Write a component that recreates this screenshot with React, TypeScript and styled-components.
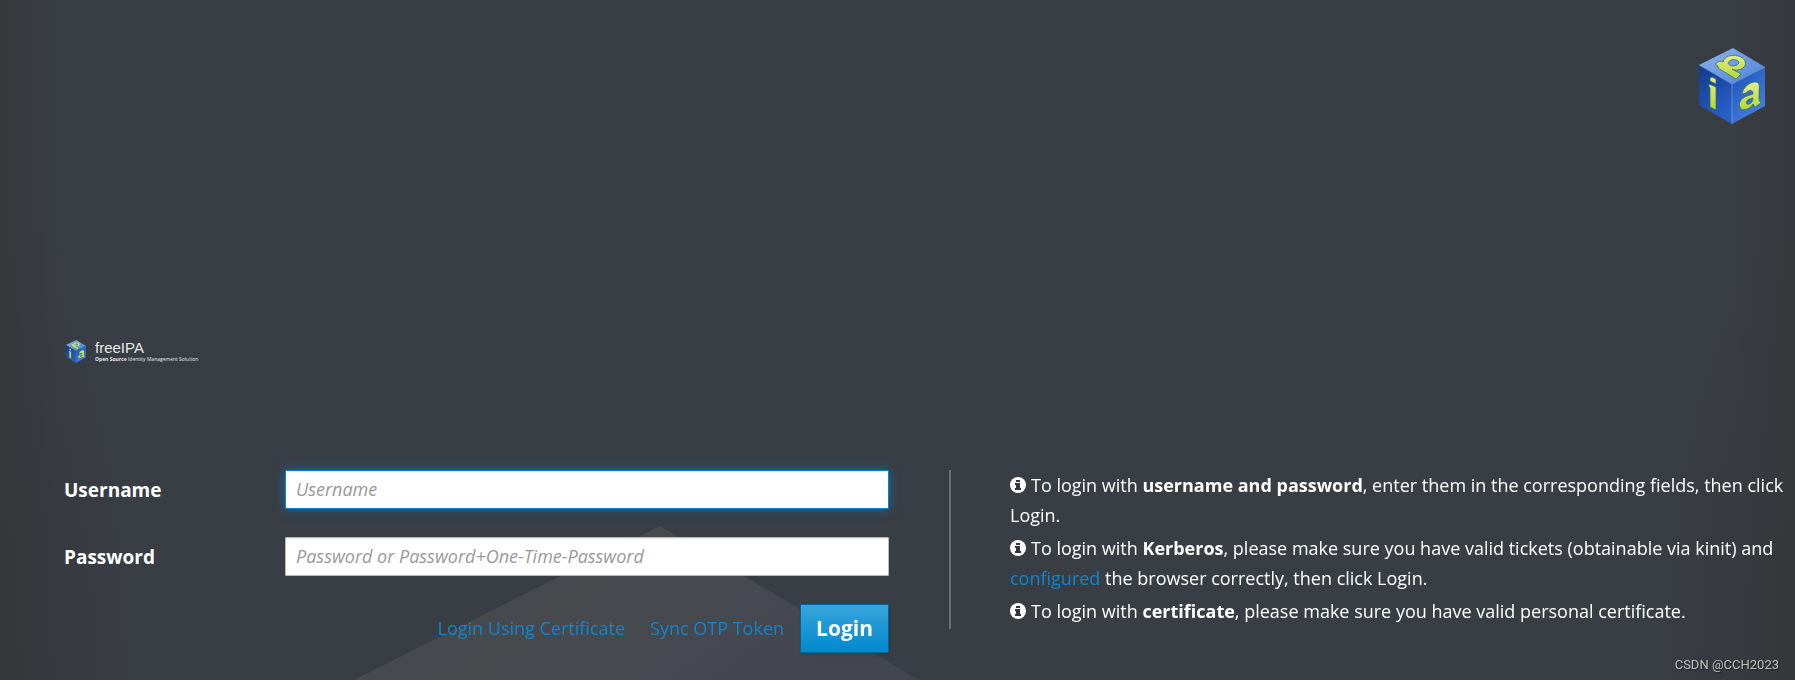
import React from "react";
import styled, { createGlobalStyle } from "styled-components";

const GlobalStyle = createGlobalStyle`
  * { box-sizing: border-box; }
  body {
    margin: 0;
    background: #393d44;
    color: #fff;
    font-family: "Open Sans", "Noto Sans", sans-serif;
    font-size: 18px;
    line-height: 30px;
  }
`;

const Page = styled.div`
  position: relative;
  isolation: isolate;
  display: flex;
  flex-direction: column;
  min-height: 100vh;
  padding-left: 64px;
  overflow: hidden;
  background:
    radial-gradient(ellipse 140px 480px at 0 100%, rgba(51, 55, 57, 0.7), transparent),
    radial-gradient(ellipse 140px 480px at 100% 100%, rgba(51, 55, 57, 0.7), transparent),
    linear-gradient(90deg, rgba(53, 57, 59, 0.8), transparent 60px),
    linear-gradient(270deg, rgba(53, 57, 59, 0.8), transparent 60px),
    #393d44;
`;

const Backdrop = styled.svg`
  position: absolute;
  z-index: -1;
  left: 354px;
  bottom: 0;
  width: 565px;
  height: 154px;
`;

const Header = styled.header`
  display: flex;
  justify-content: flex-end;
  padding: 48px 30px 0 0;
  height: 340px;
`;

const Brand = styled.div`
  height: 130px;
  padding-left: 2px;
`;

const Content = styled.main`
  display: grid;
  grid-template-columns: 825fr 846fr;
  column-gap: 60px;
  align-items: start;
`;

const LoginForm = styled.form`
  display: flex;
  flex-direction: column;
  gap: 28px;
`;

const Field = styled.div`
  display: grid;
  grid-template-columns: 221px 1fr;
  align-items: center;
`;

const Label = styled.label`
  font-size: 19px;
  font-weight: 700;
`;

const TextInput = styled.input`
  width: 100%;
  height: 39px;
  padding: 1px 10px 3px;
  border: 1px solid #bababa;
  border-radius: 1px;
  background: #fff;
  color: #333;
  font: inherit;
  box-shadow: inset 0 1px 1px rgba(0, 0, 0, 0.075);
  outline: none;

  &::placeholder {
    color: #999;
    font-style: italic;
    opacity: 1;
  }

  &:focus {
    border-color: #0088ce;
    box-shadow: inset 0 1px 1px rgba(0, 0, 0, 0.075), 0 0 12px rgba(0, 136, 206, 0.6);
  }
`;

const Actions = styled.div`
  display: flex;
  justify-content: flex-end;
  align-items: center;
`;

const Link = styled.a`
  color: #0f86d3;
  text-decoration: none;
`;

const ActionLink = styled(Link)`
  margin-right: 25px;
  padding-bottom: 2px;

  & + & {
    margin-right: 16px;
  }
`;

const LoginButton = styled.button`
  height: 49px;
  padding: 0 15px 2px;
  border: 1px solid #00659c;
  border-radius: 1px;
  background: linear-gradient(#39a5dc, #0088ce);
  box-shadow: 0 2px 3px rgba(3, 3, 3, 0.1);
  color: #fff;
  font: 700 21px/30px "Open Sans", "Noto Sans", sans-serif;
`;

const Help = styled.ul`
  margin: 0;
  padding: 0 0 0 59px;
  border-left: 2px solid #6c6f73;
  list-style: none;
`;

const HelpItem = styled.li`
  padding-bottom: 3px;
`;

const Info = styled.svg`
  width: 16px;
  height: 16px;
  margin-right: 5px;
  vertical-align: -1px;
`;

const Watermark = styled.footer`
  position: absolute;
  right: 16px;
  bottom: 5px;
  color: #bfc0c2;
  font: 13px/20px Roboto, "Liberation Sans", sans-serif;
  text-shadow: 1px 1px 1px #222;
`;

function CubeShapes({ id }: { id: string }) {
  return (
    <>
      <defs>
        <linearGradient id={`${id}-top`} x1="0" y1="0" x2="1" y2="1">
          <stop offset="0" stopColor="#8fb5ec" />
          <stop offset="1" stopColor="#4b80d8" />
        </linearGradient>
        <linearGradient id={`${id}-left`} x1="0" y1="0" x2="0.5" y2="1">
          <stop offset="0" stopColor="#12398a" />
          <stop offset="1" stopColor="#2860c8" />
        </linearGradient>
        <linearGradient id={`${id}-right`} x1="0" y1="0" x2="0.6" y2="1">
          <stop offset="0" stopColor="#1c4fb4" />
          <stop offset="1" stopColor="#4580e0" />
        </linearGradient>
        <linearGradient id={`${id}-glyph`} x1="0" y1="0" x2="0" y2="1">
          <stop offset="0" stopColor="#e3ec8c" />
          <stop offset="1" stopColor="#b4d82e" />
        </linearGradient>
      </defs>
      <path d="M34 0 66 19 33 36 0 17Z" fill={`url(#${id}-top)`} />
      <path d="M0 17 33 36V76L0 57Z" fill={`url(#${id}-left)`} />
      <path d="M33 36 66 19V58L33 76Z" fill={`url(#${id}-right)`} />
      <path d="M0 17 33 36 66 19M33 36V76" fill="none" stroke="#7ea6e8" strokeWidth="1" opacity="0.6" />
      <g fill={`url(#${id}-glyph)`} stroke="#2f6a5c" strokeWidth="0.7" fillRule="evenodd">
        <path d="M16 16 21 13 24 14C25 9 32 6 39 8C46 10 48 15 45 19C42 22 36 23 33 21L42 26 37 31 19 20V18ZM29 15C30 19 38 19 40 15C40 11 31 10 29 15Z" />
        <path d="M11 30 13 29 17 31V36L11 33ZM10 36 17 39V62L11 59V40L10 39Z" />
        <path d="M43 46C44 39 51 34 56 34C60 34 61 37 60 43V52L62 55 56 59 54 56C51 61 45 63 42 61C38 56 42 50 48 48L54 46C55 42 50 41 47 45ZM54 50C48 51 46 54 48 56C51 57 54 54 54 50Z" />
      </g>
    </>
  );
}

function InfoIcon() {
  return (
    <Info viewBox="0 0 16 16" aria-hidden="true">
      <circle cx="8" cy="8" r="8" fill="#fff" />
      <path d="M6 3H10V5H6ZM5 6H10V11H11V13H5V11H6V8H5Z" fill="#33373d" />
    </Info>
  );
}

export default function App() {
  return (
    <Page>
      <GlobalStyle />
      <Backdrop viewBox="0 0 565 153" preserveAspectRatio="none" aria-hidden="true">
        <defs>
          <linearGradient id="facet" x1="0" y1="0" x2="1" y2="0.4">
            <stop offset="0" stopColor="#474b4c" />
            <stop offset="0.3" stopColor="#474a50" />
            <stop offset="0.5" stopColor="#464a4d" />
            <stop offset="0.75" stopColor="#464950" />
            <stop offset="1" stopColor="#43464e" />
          </linearGradient>
        </defs>
        <path d="M0 153 306 0 565 153Z" fill="url(#facet)" />
      </Backdrop>
      <Header>
        <svg width="66" height="76" viewBox="0 0 66 76" role="img" aria-label="IPA">
          <CubeShapes id="cube" />
        </svg>
      </Header>
      <Brand>
        <svg width="134" height="24" viewBox="0 0 134 24" role="img" aria-label="freeIPA">
          <g transform="scale(0.3)">
            <CubeShapes id="brand" />
          </g>
          <g fill="#e8e8ea" fontFamily="'Liberation Sans', Arial, sans-serif">
            <text x="29" y="13" fontSize="15">freeIPA</text>
            <text x="29" y="21" fontSize="5" fontFamily="'Open Sans', sans-serif">
              <tspan fontWeight="700">Open Source</tspan> Identity Management Solution
            </text>
          </g>
        </svg>
      </Brand>
      <Content>
        <LoginForm onSubmit={(event) => event.preventDefault()}>
          <Field>
            <Label htmlFor="username">Username</Label>
            <TextInput id="username" type="text" placeholder="Username" autoFocus />
          </Field>
          <Field>
            <Label htmlFor="password">Password</Label>
            <TextInput id="password" type="password" placeholder="Password or Password+One-Time-Password" />
          </Field>
          <Actions>
            <ActionLink href="#certificate">Login Using Certificate</ActionLink>
            <ActionLink href="#otp">Sync OTP Token</ActionLink>
            <LoginButton type="submit">Login</LoginButton>
          </Actions>
        </LoginForm>
        <Help>
          <HelpItem>
            <InfoIcon />
            To login with <strong>username and password</strong>, enter them in the corresponding fields, then click Login.
          </HelpItem>
          <HelpItem>
            <InfoIcon />
            To login with <strong>Kerberos</strong>, please make sure you have valid tickets (obtainable via kinit) and{" "}
            <Link href="#configured">configured</Link> the browser correctly, then click Login.
          </HelpItem>
          <HelpItem>
            <InfoIcon />
            To login with <strong>certificate</strong>, please make sure you have valid personal certificate.
          </HelpItem>
        </Help>
      </Content>
      <Watermark>CSDN @CCH2023</Watermark>
    </Page>
  );
}
